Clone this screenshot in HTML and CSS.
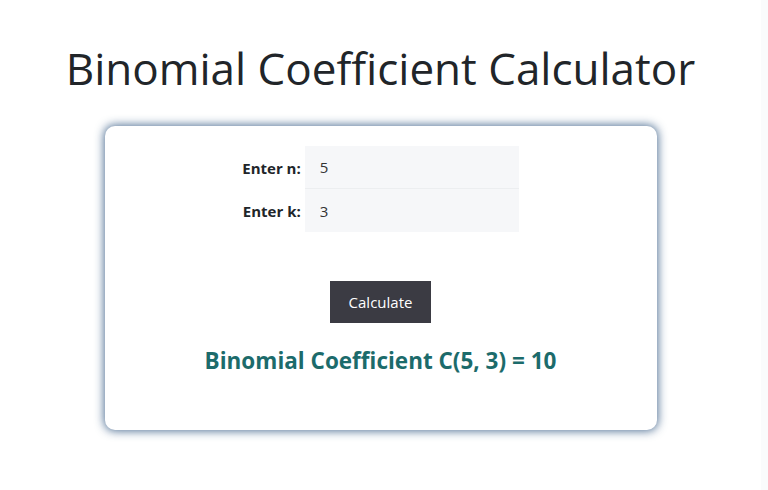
FILE: index.html
```html
<!DOCTYPE html>
<html lang="en">
<head>
    <meta charset="UTF-8">
    <meta name="viewport" content="width=device-width, initial-scale=1.0">
    <title>Binomial Coefficient Calculator</title>
    <link rel="stylesheet" href="styles.css">
</head>
<body>
    <div class="page">
        <h1 class="title">Binomial Coefficient Calculator</h1>

        <div class="card">
            <form class="calc-form" onsubmit="return false;">
                <div class="fields">
                    <label for="nInput">Enter n:</label>
                    <input type="text" id="nInput" class="num-input" value="5">
                    <label for="kInput">Enter k:</label>
                    <input type="text" id="kInput" class="num-input" value="3">
                </div>
                <button class="calc-btn">Calculate</button>
            </form>
            <p class="result">Binomial Coefficient C(5, 3) = 10</p>
        </div>
    </div>
</body>
</html>
```

FILE: styles.css
```css
:root {
    --text-color: #212529;
    --input-bg: #f6f7f9;
    --btn-color: #3b3b43;
    --result-color: #1c6b6b;
    --shadow-color: rgba(62, 98, 138, 0.9);
}

* {
    margin: 0;
    padding: 0;
    box-sizing: border-box;
}

body {
    font-family: "Segoe UI", "Open Sans", "Noto Sans", sans-serif;
    background-color: #fafbfc;
    color: var(--text-color);
}

.page {
    width: 761px;
    min-height: 490px;
    background: white;
    padding-top: 40px;
}

.title {
    text-align: center;
    font-size: 44px;
    font-weight: 400;
    line-height: 56px;
    margin-bottom: 30px;
}

.card {
    width: 552px;
    margin: 0 auto;
    background: white;
    border-radius: 10px;
    box-shadow: 0 0 10px 1px var(--shadow-color);
    padding: 20px 0 53px;
}

.calc-form {
    display: flex;
    flex-direction: column;
    align-items: center;
}

.fields {
    display: grid;
    grid-template-columns: auto 214px;
    column-gap: 4px;
    align-items: center;
}

.fields label {
    text-align: right;
    font-weight: bold;
    font-size: 15px;
}

.num-input {
    height: 43px;
    border: none;
    border-bottom: 1px solid #eceef0;
    background: var(--input-bg);
    padding: 0 15px;
    font-family: inherit;
    font-size: 15px;
    color: #333;
}

.num-input:last-child {
    border-bottom: none;
}

.calc-btn {
    margin-top: 49px;
    width: 101px;
    height: 42px;
    border: none;
    background: var(--btn-color);
    color: white;
    font-family: inherit;
    font-size: 15px;
    cursor: pointer;
}

.result {
    margin-top: 22px;
    text-align: center;
    font-size: 22.5px;
    font-weight: bold;
    color: var(--result-color);
    line-height: 32px;
}
```
